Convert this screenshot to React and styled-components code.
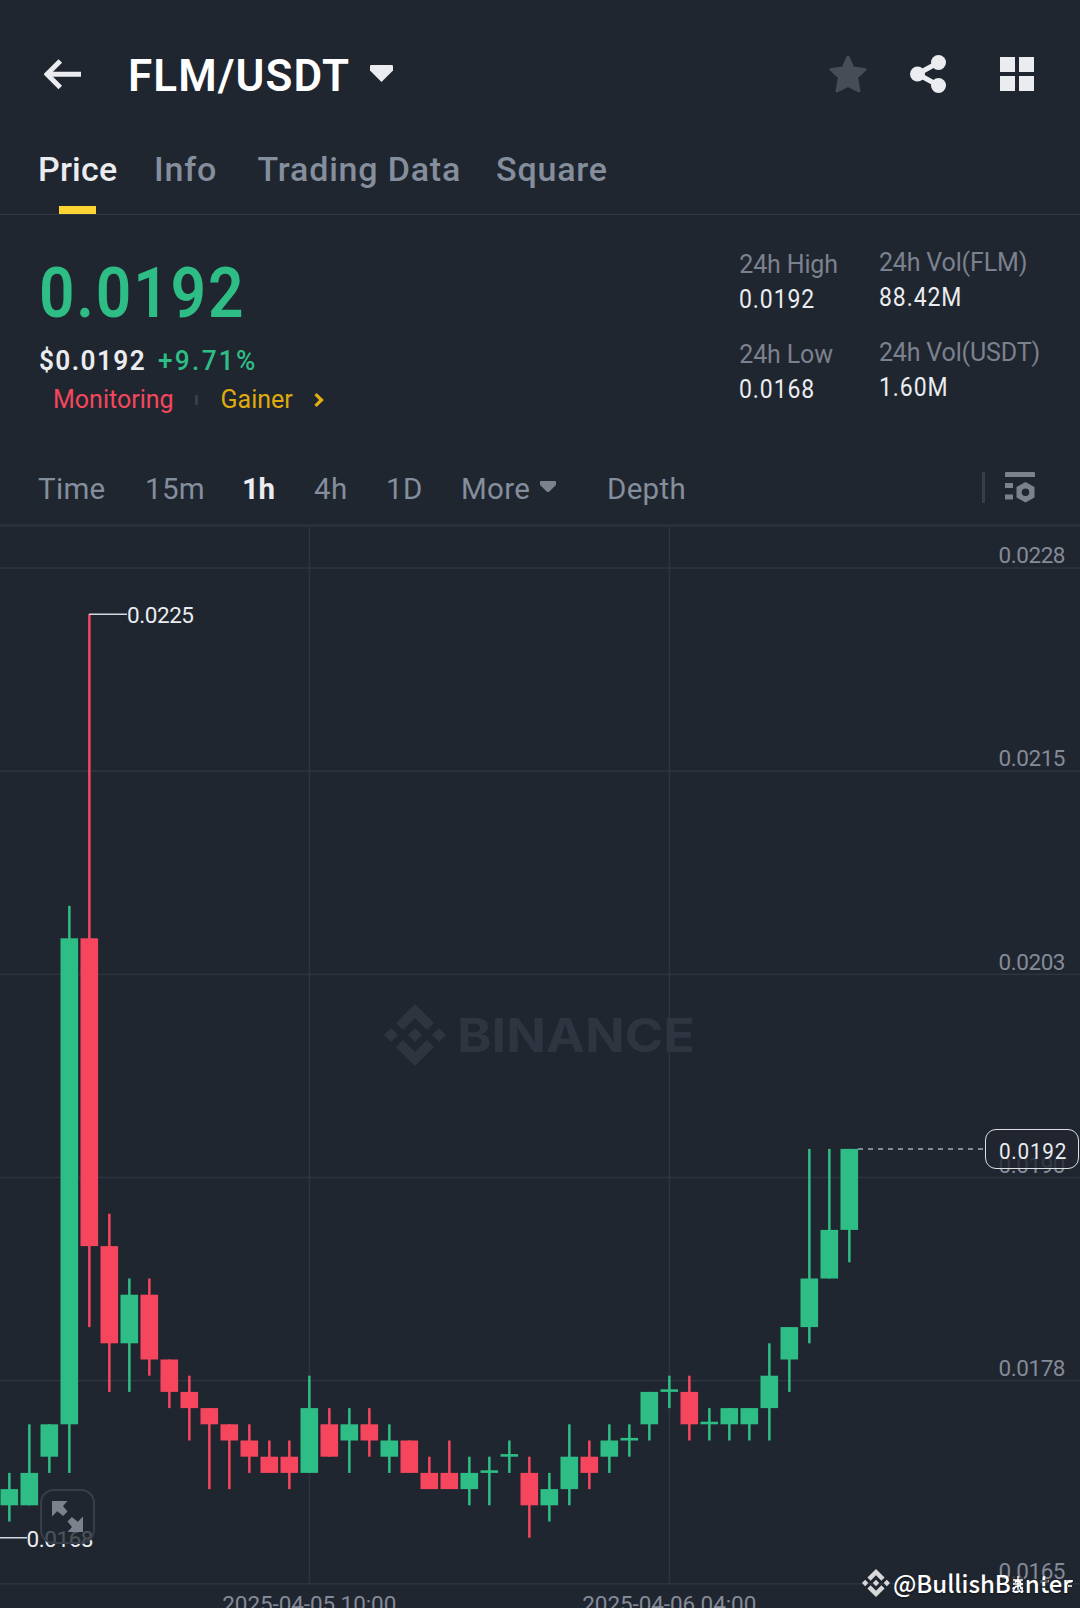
import React from 'react';
import styled, { createGlobalStyle } from 'styled-components';
import { SiBinance } from 'react-icons/si';

const GREEN = '#2ebd85';
const RED = '#f6465d';
const GRID = '#2e3540';

const TABS = ['Price', 'Info', 'Trading Data', 'Square'];

const STATS = [
  [
    { label: '24h High', value: '0.0192' },
    { label: '24h Low', value: '0.0168' },
  ],
  [
    { label: '24h Vol(FLM)', value: '88.42M' },
    { label: '24h Vol(USDT)', value: '1.60M' },
  ],
];

const INTERVALS = ['Time', '15m', '1h', '4h', '1D', 'More', 'Depth'];

// [open, high, low, close] in ticks of 0.0001
const CANDLES = [
  [170, 172, 169, 171],
  [170, 175, 170, 172],
  [173, 175, 172, 175],
  [175, 207, 172, 205],
  [205, 225, 181, 186],
  [186, 188, 177, 180],
  [180, 184, 177, 183],
  [183, 184, 178, 179],
  [179, 179, 176, 177],
  [177, 178, 174, 176],
  [176, 176, 171, 175],
  [175, 175, 171, 174],
  [174, 175, 172, 173],
  [173, 174, 172, 172],
  [173, 174, 171, 172],
  [172, 178, 172, 176],
  [175, 176, 173, 173],
  [174, 176, 172, 175],
  [175, 176, 173, 174],
  [173, 175, 172, 174],
  [174, 174, 172, 172],
  [172, 173, 171, 171],
  [172, 174, 171, 171],
  [171, 173, 170, 172],
  [172, 173, 170, 172],
  [173, 174, 172, 173],
  [172, 173, 168, 170],
  [170, 172, 169, 171],
  [171, 175, 170, 173],
  [173, 174, 171, 172],
  [173, 175, 172, 174],
  [174, 175, 173, 174],
  [175, 177, 174, 177],
  [177, 178, 176, 177],
  [177, 178, 174, 175],
  [175, 176, 174, 175],
  [175, 176, 174, 176],
  [175, 176, 174, 176],
  [176, 180, 174, 178],
  [179, 181, 177, 181],
  [181, 192, 180, 184],
  [184, 192, 184, 187],
  [187, 192, 185, 192],
];

const PRICE_LINES = ['0.0228', '0.0215', '0.0203', '0.0190', '0.0178', '0.0165'];
const TIME_LINES = [
  { x: 309.3, label: '2025-04-05 10:00' },
  { x: 669.3, label: '2025-04-06 04:00' },
];

const TOP = 41;
const STEP = 203.15;
const BOTTOM = TOP + STEP * 5;

const yOf = (tick) => 1010.7 - (tick - 168) * 16.2;
const xOf = (index) => 9.3 + index * 20;

const Candle = ({ index, data: [open, high, low, close] }) => {
  const x = xOf(index);
  const top = yOf(Math.max(open, close));
  const bottom = yOf(Math.min(open, close));
  const color = close >= open ? GREEN : RED;
  const height = Math.max(bottom - top, 2.6);

  return (
    <g fill={color}>
      <rect x={x - 1.2} y={yOf(high)} width="2.5" height={yOf(low) - yOf(high)} />
      <rect x={x - 8.8} y={bottom - height} width="17.6" height={height} />
    </g>
  );
}

const Caret = ({ width, color }) => (
  <svg width={width} height={width * 0.74} viewBox="0 0 23 17">
    <path d="M0 1.2Q0 0 1.2 0H21.8Q23 0 23 1.2V5.6L11.5 17L0 5.6z" fill={color} />
  </svg>
);

const Chart = () => (
  <ChartArea>
    <ChartSvg viewBox="0 0 1080 1081">
      {PRICE_LINES.map((label, i) => (
        <rect key={label} x="0" y={TOP - 0.7 + i * STEP} width="1080" height="1.5" fill={GRID} />
      ))}
      {TIME_LINES.map(({ x }) => (
        <rect key={x} x={x - 0.7} y="0" width="1.5" height={BOTTOM} fill={GRID} />
      ))}

      <SiBinance x="384" y="477" size="62" color="#2e3541" />
      <Brand x="457" y="524.5" textLength="238" lengthAdjust="spacingAndGlyphs">BINANCE</Brand>

      {PRICE_LINES.map((label, i) => (
        <AxisText key={label} x="998.5" y={TOP - 4.7 + i * STEP} textLength="67">{label}</AxisText>
      ))}
      {TIME_LINES.map(({ x, label }) => (
        <AxisText key={label} x={x - 87} y="1085" textLength="174">{label}</AxisText>
      ))}

      {CANDLES.map((data, i) => <Candle key={i} index={i} data={data} />)}

      <path d="M89 87.3H127M0 1010.7H27" stroke="#d5d8de" strokeWidth="1.5" />
      <MarkText x="127" y="96" textLength="67">0.0225</MarkText>
      <MarkText x="26.5" y="1020" textLength="67">0.0168</MarkText>

      <path d="M858 622H984" stroke="#a3a9b8" strokeWidth="1.7" strokeDasharray="5 5" />
    </ChartSvg>
    <PriceTag><TagText>0.0192</TagText></PriceTag>
    <ExpandButton>
      <svg width="31" height="31" viewBox="0 0 31 31" fill="#7b818d">
        <path d="M0 0H15.5L11 5L15.5 10.5L11.2 15L5.2 10.3L0 15.5z" />
        <path d="M31 31H15.5L20 26L15.5 20.5L19.8 16L25.8 20.7L31 15.5z" />
      </svg>
    </ExpandButton>
    <Author>
      <SiBinance size="28" color="#d6d8da" />
      <AuthorName>@BullishBanter</AuthorName>
      <Scratches width="64" height="18" viewBox="0 0 64 18">
        <path d="M0 2H4M8 2H12M0 6H3M9 6H12M0 10H3M9 10H12M0 14H4M8 14H12M28 5H36M28 11H35M56 3H62M56 8H62" stroke="#202630" strokeWidth="1.3" />
        <path d="M1 4H11M1 8H11M6 0V14M3 11L1 16M9 11L11 16M55 5H61M56 10H60" stroke="#fff" strokeWidth="1.4" />
      </Scratches>
    </Author>
  </ChartArea>
);

const App = () => {
  return (
    <>
      <GlobalStyle />
      <Screen>
        <Header>
          <BackIcon width="37" height="31" viewBox="0 0 37 31" fill="none" stroke="#eaecef">
            <path d="M37 15.2H4" strokeWidth="5" />
            <path d="M16.3 2L3 15.2L16.3 28.5" strokeWidth="5" />
          </BackIcon>
          <Pair>FLM/USDT</Pair>
          <Caret width={23} color="#eaecef" />
          <Actions>
            <svg width="38" height="38" viewBox="0 0 38 38">
              <path d="M19 2L24 13L36 14.5L27.5 22.5L30 36L19 30.5L8 36L10.5 22.5L2 14.5L14 13z" fill="#474d57" stroke="#474d57" strokeWidth="3" strokeLinejoin="round" />
            </svg>
            <svg width="36" height="38" viewBox="0 0 36 38" fill="#eaecef">
              <path d="M28.5 7.5L7.5 19L28.5 30.5" fill="none" stroke="#eaecef" strokeWidth="5" />
              <circle cx="28.5" cy="7.5" r="7.5" />
              <circle cx="7.5" cy="19" r="7.5" />
              <circle cx="28.5" cy="30.5" r="7.5" />
            </svg>
            <svg width="34" height="34" viewBox="0 0 34 34" fill="#eaecef">
              <path d="M0 0H15V15H0zM19 0H34V15H19zM0 19H15V34H0zM19 19H34V34H19z" />
            </svg>
          </Actions>
        </Header>

        <Tabs>
          {TABS.map((name, i) => <Tab key={name} $active={i === 0}>{name}</Tab>)}
        </Tabs>

        <Summary>
          <div>
            <LastPrice>0.0192</LastPrice>
            <ChangeRow>
              <FiatPrice>$0.0192</FiatPrice>
              <Change>+9.71%</Change>
            </ChangeRow>
            <TagRow>
              <TagLabel $color={RED}>Monitoring</TagLabel>
              <TagDivider />
              <TagLabel $color="#deaa0c">Gainer</TagLabel>
              <svg width="10" height="14" viewBox="0 0 10 14">
                <path d="M1.5 1.2L7.5 7L1.5 12.8" fill="none" stroke="#e5b00a" strokeWidth="3.2" />
              </svg>
            </TagRow>
          </div>
          <Stats>
            {STATS.map((column, i) => (
              <StatColumn key={i} $raised={i === 1}>
                {column.map(({ label, value }) => (
                  <div key={label}>
                    <StatLabel>{label}</StatLabel>
                    <StatValue>{value}</StatValue>
                  </div>
                ))}
              </StatColumn>
            ))}
          </Stats>
        </Summary>

        <Toolbar>
          <Intervals>
            {INTERVALS.map((name) => (
              <Interval key={name} $active={name === '1h'}>
                <span>{name}</span>
                {name === 'More' && <Caret width={16} color="#7b818d" />}
              </Interval>
            ))}
          </Intervals>
          <ToolDivider />
          <svg width="30" height="31" viewBox="0 0 30 31" fill="#7b818d">
            <path d="M1 0H29Q30 0 30 1V5H0V1Q0 0 1 0zM0 11H8V16H0zM0 22.5H8V27.5H0z" />
            <path fillRule="evenodd" d="M20.5 10L29.5 15V25.5L20.5 30.5L11.5 25.5V15zM20.5 16.5A3.8 3.8 0 1 0 20.5 24.1A3.8 3.8 0 1 0 20.5 16.5z" />
          </svg>
        </Toolbar>

        <Chart />
      </Screen>
    </>
  );
}

const GlobalStyle = createGlobalStyle`
    body {
      margin: 0;
      background-color: #202630;
    }

    * {
      box-sizing: border-box;
    }

    svg {
      display: block;
      flex-shrink: 0;
    }
`

const Screen = styled.div`
    width: 1080px;
    height: 1608px;
    overflow: hidden;
    display: flex;
    flex-direction: column;
    background-color: #202630;
    color: #eaecef;
    font-family: Roboto, 'Liberation Sans', sans-serif;
`

const Header = styled.header`
    height: 150px;
    padding: 0 46px 2px 44px;
    display: flex;
    align-items: center;
`

const BackIcon = styled.svg`
    margin-right: 47px;
`

const Pair = styled.h1`
    width: 242px;
    margin: 0;
    padding-top: 4px;
    color: #fff;
    font-size: 44px;
    font-weight: 600;
    letter-spacing: 1.1px;
`

const Actions = styled.div`
    flex: 1;
    display: flex;
    justify-content: flex-end;
    align-items: center;

    > svg + svg {
      margin-left: 43px;
    }

    > svg:last-child {
      margin-left: 54px;
    }
`

const Tabs = styled.nav`
    height: 65px;
    padding-left: 38px;
    display: grid;
    grid-template-columns: 116px 103.5px 238.5px 1fr;
    border-bottom: 1px solid #323842;
`

const Tab = styled.div`
    height: 64px;
    color: ${({ $active }) => ($active ? '#eaecef' : '#848e9c')};
    font-size: 34px;
    font-weight: 500;
    line-height: 38px;
    letter-spacing: ${({ $active }) => ($active ? '0.2px' : '0.8px')};

    &::after {
      content: '';
      display: ${({ $active }) => ($active ? 'block' : 'none')};
      width: 37px;
      height: 8px;
      margin: 18px 0 0 21px;
      background-color: #fcd535;
    }
`

const Summary = styled.section`
    height: 225px;
    padding: 37px 40px 0 39px;
    display: flex;
    justify-content: space-between;
`

// Roboto figures are squeezed a little to get the narrow DIN look
const Figure = styled.div`
    transform: scaleX(0.92);
    transform-origin: left;
    white-space: nowrap;
`

const LastPrice = styled(Figure)`
    transform: scaleX(0.89);
    color: ${GREEN};
    font-size: 70px;
    font-weight: 600;
    line-height: 83px;
    letter-spacing: 2px;
`

const ChangeRow = styled.div`
    display: flex;
    line-height: 52px;
`

const FiatPrice = styled(Figure)`
    width: 119px;
    font-size: 28.5px;
    font-weight: 600;
    letter-spacing: 1.5px;
`

const Change = styled(Figure)`
    color: ${GREEN};
    font-size: 28.5px;
    font-weight: 500;
    letter-spacing: 2.5px;
`

const TagRow = styled.div`
    padding-left: 14px;
    display: flex;
    align-items: center;
    line-height: 26px;
`

const TagLabel = styled.span`
    margin-right: 21px;
    color: ${({ $color }) => $color};
    font-size: 25px;
`

const TagDivider = styled.span`
    width: 3px;
    height: 10px;
    margin-right: 23px;
    background-color: #363e49;
`

const Stats = styled.div`
    display: flex;
    gap: 41px;
    line-height: 35px;
`

const StatColumn = styled.div`
    display: flex;
    flex-direction: column;
    gap: 20px;
    margin-top: ${({ $raised }) => ($raised ? '-7px' : '-5px')};
`

const StatLabel = styled.div`
    color: #7b818e;
    font-size: 25px;
    font-weight: 400;
    letter-spacing: -0.15px;
`

const StatValue = styled(Figure)`
    font-size: 25px;
    letter-spacing: 1px;
`

const Toolbar = styled.div`
    height: 87px;
    padding: 10px 45px 0 38px;
    display: flex;
    align-items: center;
    border-bottom: 3px solid #2a303b;
`

const Intervals = styled.div`
    flex: 1;
    padding-top: 3px;
    display: grid;
    grid-template-columns: 107px 97px 72px 72px 75px 146px 1fr;
`

const Interval = styled.div`
    display: flex;
    align-items: center;
    color: ${({ $active }) => ($active ? '#eaecef' : '#848e9c')};
    font-size: 29.5px;
    font-weight: ${({ $active }) => ($active ? 700 : 400)};
    line-height: 36px;
    letter-spacing: ${({ $active }) => ($active ? '-0.4px' : '0.3px')};

    > svg {
      margin: -4px 0 0 10px;
    }
`

const ToolDivider = styled.span`
    width: 3px;
    height: 31px;
    margin-right: 20px;
    background-color: #363e49;
`

const ChartArea = styled.div`
    position: relative;
    height: 1081px;
`

const ChartSvg = styled.svg`
    width: 1080px;
    height: 1081px;
`

const AxisText = styled.text`
    fill: #848a97;
    font-size: 22.5px;
`

const MarkText = styled.text`
    fill: #eaecef;
    font-size: 22.5px;
`

const Brand = styled.text`
    fill: #2e3541;
    font-family: Inter, sans-serif;
    font-size: 47px;
    font-weight: 700;
`

const PriceTag = styled.div`
    position: absolute;
    top: 602px;
    right: 1px;
    width: 94px;
    height: 40px;
    padding-left: 13px;
    border: 1.5px solid #dcdfe4;
    border-radius: 11px;
    background-color: rgba(32, 38, 48, 0.8);
    line-height: 43px;
`

const TagText = styled(Figure)`
    font-size: 22.5px;
    letter-spacing: 0.8px;
`

const ExpandButton = styled.div`
    position: absolute;
    left: 40px;
    top: 962px;
    width: 55px;
    height: 55px;
    display: flex;
    align-items: center;
    justify-content: center;
    border: 2px solid #373e49;
    border-radius: 14px;
    background-color: rgba(32, 38, 48, 0.78);
`

const Author = styled.div`
    position: absolute;
    left: 862px;
    top: 1039px;
    display: flex;
    align-items: center;
    gap: 3px;
`

const AuthorName = styled.span`
    color: #fff;
    font-family: 'Noto Sans CJK SC', 'Noto Sans', sans-serif;
    font-size: 24px;
    font-weight: 500;
    line-height: 34px;
    text-shadow: 0 1px 2px rgba(0, 0, 0, 0.5);
`

const Scratches = styled.svg`
    position: absolute;
    left: 150px;
    top: 10px;
`

export default App;
